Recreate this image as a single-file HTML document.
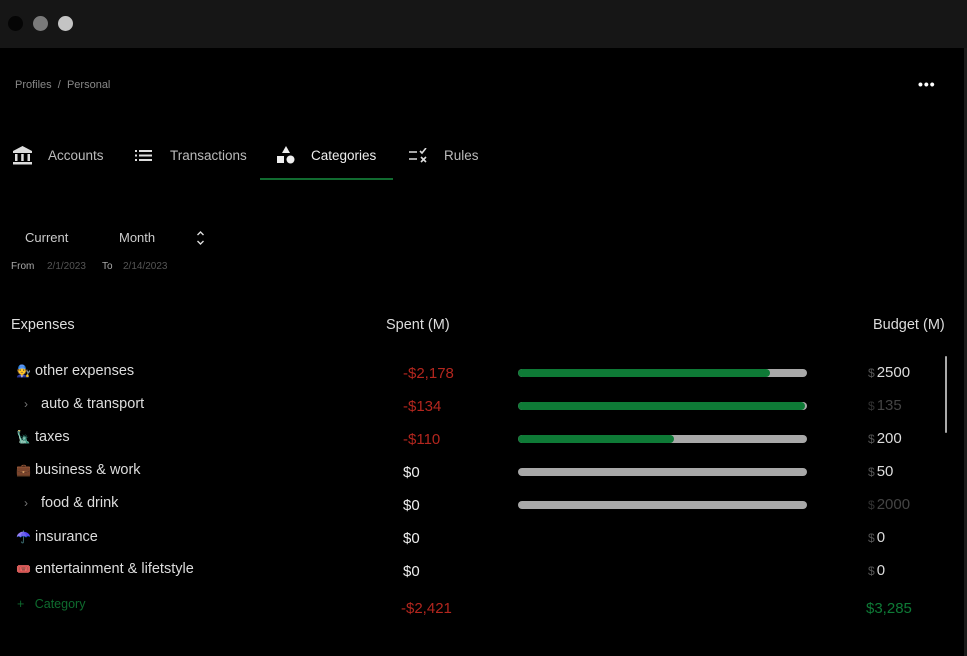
<!DOCTYPE html>
<html><head><meta charset="utf-8"><style>
*{margin:0;padding:0;box-sizing:border-box}
body{width:967px;height:656px;background:#000;font-family:"Liberation Sans","Noto Sans CJK JP",sans-serif;color:#ddd;position:relative;overflow:hidden}
.a{position:absolute;white-space:nowrap}
.tb{position:absolute;left:0;top:0;width:967px;height:48px;background:#161616}
.dot{position:absolute;top:16px;width:15px;height:15px;border-radius:50%}
.bar{position:absolute;left:518px;width:289px;height:8px;border-radius:4px;background:#a8a8a8;overflow:hidden}
.bar i{display:block;height:100%;background:#0e7a36;border-radius:4px}
.red{color:#b3261e}
.cat{font-size:14.5px;color:#ddd}
.sp{font-size:15px}
.bd{font-size:15px;color:#ddd}
.bd b{font-weight:normal;color:#555;font-size:12px;margin-right:2px}
.ch{position:absolute;font-size:12px;color:#777}
</style></head><body>
<div class="tb"></div>
<div class="dot" style="left:8px;background:#050505"></div>
<div class="dot" style="left:33px;background:#7a7a7a"></div>
<div class="dot" style="left:58px;background:#c4c4c4"></div>
<div class="a" style="left:964px;top:48px;width:3px;height:608px;background:#1a1a1a"></div>

<div class="a" style="left:15px;top:79px;font-size:11px;color:#888">Profiles &nbsp;/&nbsp; Personal</div>
<div class="a" style="left:918px;top:76px;font-size:14px;color:#fff;letter-spacing:1px;font-weight:bold">•••</div>

<svg class="a" style="left:12px;top:145px" width="21" height="21" viewBox="0 0 21 21" fill="#ddd"><path d="M10.5 1 L20 6 V8 H1 V6 Z"/><rect x="3" y="9" width="2.5" height="7"/><rect x="9.2" y="9" width="2.5" height="7"/><rect x="15.5" y="9" width="2.5" height="7"/><rect x="1" y="17" width="19" height="2.5"/></svg>
<div class="a" style="left:48px;top:148px;font-size:13.5px;color:#bbb">Accounts</div>
<svg class="a" style="left:135px;top:149px" width="18" height="13" viewBox="0 0 18 13" fill="#ddd"><rect x="0" y="1" width="2" height="2"/><rect x="0" y="5.5" width="2" height="2"/><rect x="0" y="10" width="2" height="2"/><rect x="4" y="1" width="13" height="2"/><rect x="4" y="5.5" width="13" height="2"/><rect x="4" y="10" width="13" height="2"/></svg>
<div class="a" style="left:170px;top:148px;font-size:13.5px;color:#bbb">Transactions</div>
<svg class="a" style="left:276px;top:146px" width="20" height="19" viewBox="0 0 20 19" fill="#eee"><path d="M10 0 L14 7 H6 Z"/><rect x="1" y="10" width="7" height="7"/><circle cx="14.5" cy="13.5" r="4"/></svg>
<div class="a" style="left:311px;top:148px;font-size:13.5px;color:#eee">Categories</div>
<div class="a" style="left:260px;top:178px;width:133px;height:2px;background:#116b30"></div>
<svg class="a" style="left:409px;top:148px" width="20" height="15" viewBox="0 0 20 15" stroke="#ddd" stroke-width="1.6" fill="none"><path d="M0 4H8M0 11H8M11 3L13 5L17 0M12 9L17 14M17 9L12 14"/></svg>
<div class="a" style="left:444px;top:148px;font-size:13.5px;color:#bbb">Rules</div>

<div class="a" style="left:25px;top:230px;font-size:13px;color:#ccc">Current</div>
<div class="a" style="left:119px;top:230px;font-size:13px;color:#ccc">Month</div>
<svg class="a" style="left:196px;top:230px" width="9" height="16" viewBox="0 0 9 16" stroke="#ddd" stroke-width="1.4" fill="none"><path d="M1.5 5L4.5 2L7.5 5M1.5 11L4.5 14L7.5 11"/></svg>
<div class="a" style="left:11px;top:261px;font-size:10px;color:#aaa">From</div>
<div class="a" style="left:47px;top:261px;font-size:10px;color:#555">2/1/2023</div>
<div class="a" style="left:102px;top:261px;font-size:10px;color:#aaa">To</div>
<div class="a" style="left:123px;top:261px;font-size:10px;color:#555">2/14/2023</div>

<div class="a" style="left:11px;top:317px;font-size:14.5px;color:#ddd">Expenses</div>
<div class="a" style="left:386px;top:317px;font-size:14.5px;color:#ddd">Spent (M)</div>
<div class="a" style="left:873px;top:317px;font-size:14.5px;color:#ddd">Budget (M)</div>

<div class="a cat" style="left:16px;top:363px"><span style="font-size:12px">🧑‍🔧</span> other expenses</div>
<div class="ch" style="left:24px;top:397px">›</div><div class="a cat" style="left:41px;top:396px">auto &amp; transport</div>
<div class="a cat" style="left:16px;top:429px"><span style="font-size:12px">🗽</span> taxes</div>
<div class="a cat" style="left:16px;top:462px"><span style="font-size:12px">💼</span> business &amp; work</div>
<div class="ch" style="left:24px;top:496px">›</div><div class="a cat" style="left:41px;top:495px">food &amp; drink</div>
<div class="a cat" style="left:16px;top:529px"><span style="font-size:12px">☂️</span> insurance</div>
<div class="a cat" style="left:16px;top:561px"><span style="font-size:12px">🎟️</span> entertainment &amp; lifetstyle</div>
<div class="a" style="left:17px;top:597px;font-size:12.5px;color:#0e6b2e">+&nbsp;&nbsp;&nbsp;Category</div>

<div class="a sp red" style="left:403px;top:365px">-$2,178</div>
<div class="a sp red" style="left:403px;top:398px">-$134</div>
<div class="a sp red" style="left:403px;top:431px">-$110</div>
<div class="a sp" style="left:403px;top:464px;color:#eee">$0</div>
<div class="a sp" style="left:403px;top:497px;color:#eee">$0</div>
<div class="a sp" style="left:403px;top:530px;color:#eee">$0</div>
<div class="a sp" style="left:403px;top:563px;color:#eee">$0</div>
<div class="a sp red" style="left:401px;top:600px">-$2,421</div>

<div class="bar" style="top:369px"><i style="width:252px"></i></div>
<div class="bar" style="top:402px"><i style="width:287px"></i></div>
<div class="bar" style="top:435px"><i style="width:156px"></i></div>
<div class="bar" style="top:468px"></div>
<div class="bar" style="top:501px"></div>

<div class="a bd" style="left:868px;top:364px"><b>$</b>2500</div>
<div class="a bd" style="left:868px;top:397px;color:#444"><b style="color:#333">$</b>135</div>
<div class="a bd" style="left:868px;top:430px"><b>$</b>200</div>
<div class="a bd" style="left:868px;top:463px"><b>$</b>50</div>
<div class="a bd" style="left:868px;top:496px;color:#444"><b style="color:#333">$</b>2000</div>
<div class="a bd" style="left:868px;top:529px"><b>$</b>0</div>
<div class="a bd" style="left:868px;top:562px"><b>$</b>0</div>
<div class="a" style="left:866px;top:600px;font-size:15px;color:#0e7a36">$3,285</div>
<div class="a" style="left:945px;top:356px;width:2px;height:77px;background:#aaa;border-radius:1px"></div>
</body></html>
